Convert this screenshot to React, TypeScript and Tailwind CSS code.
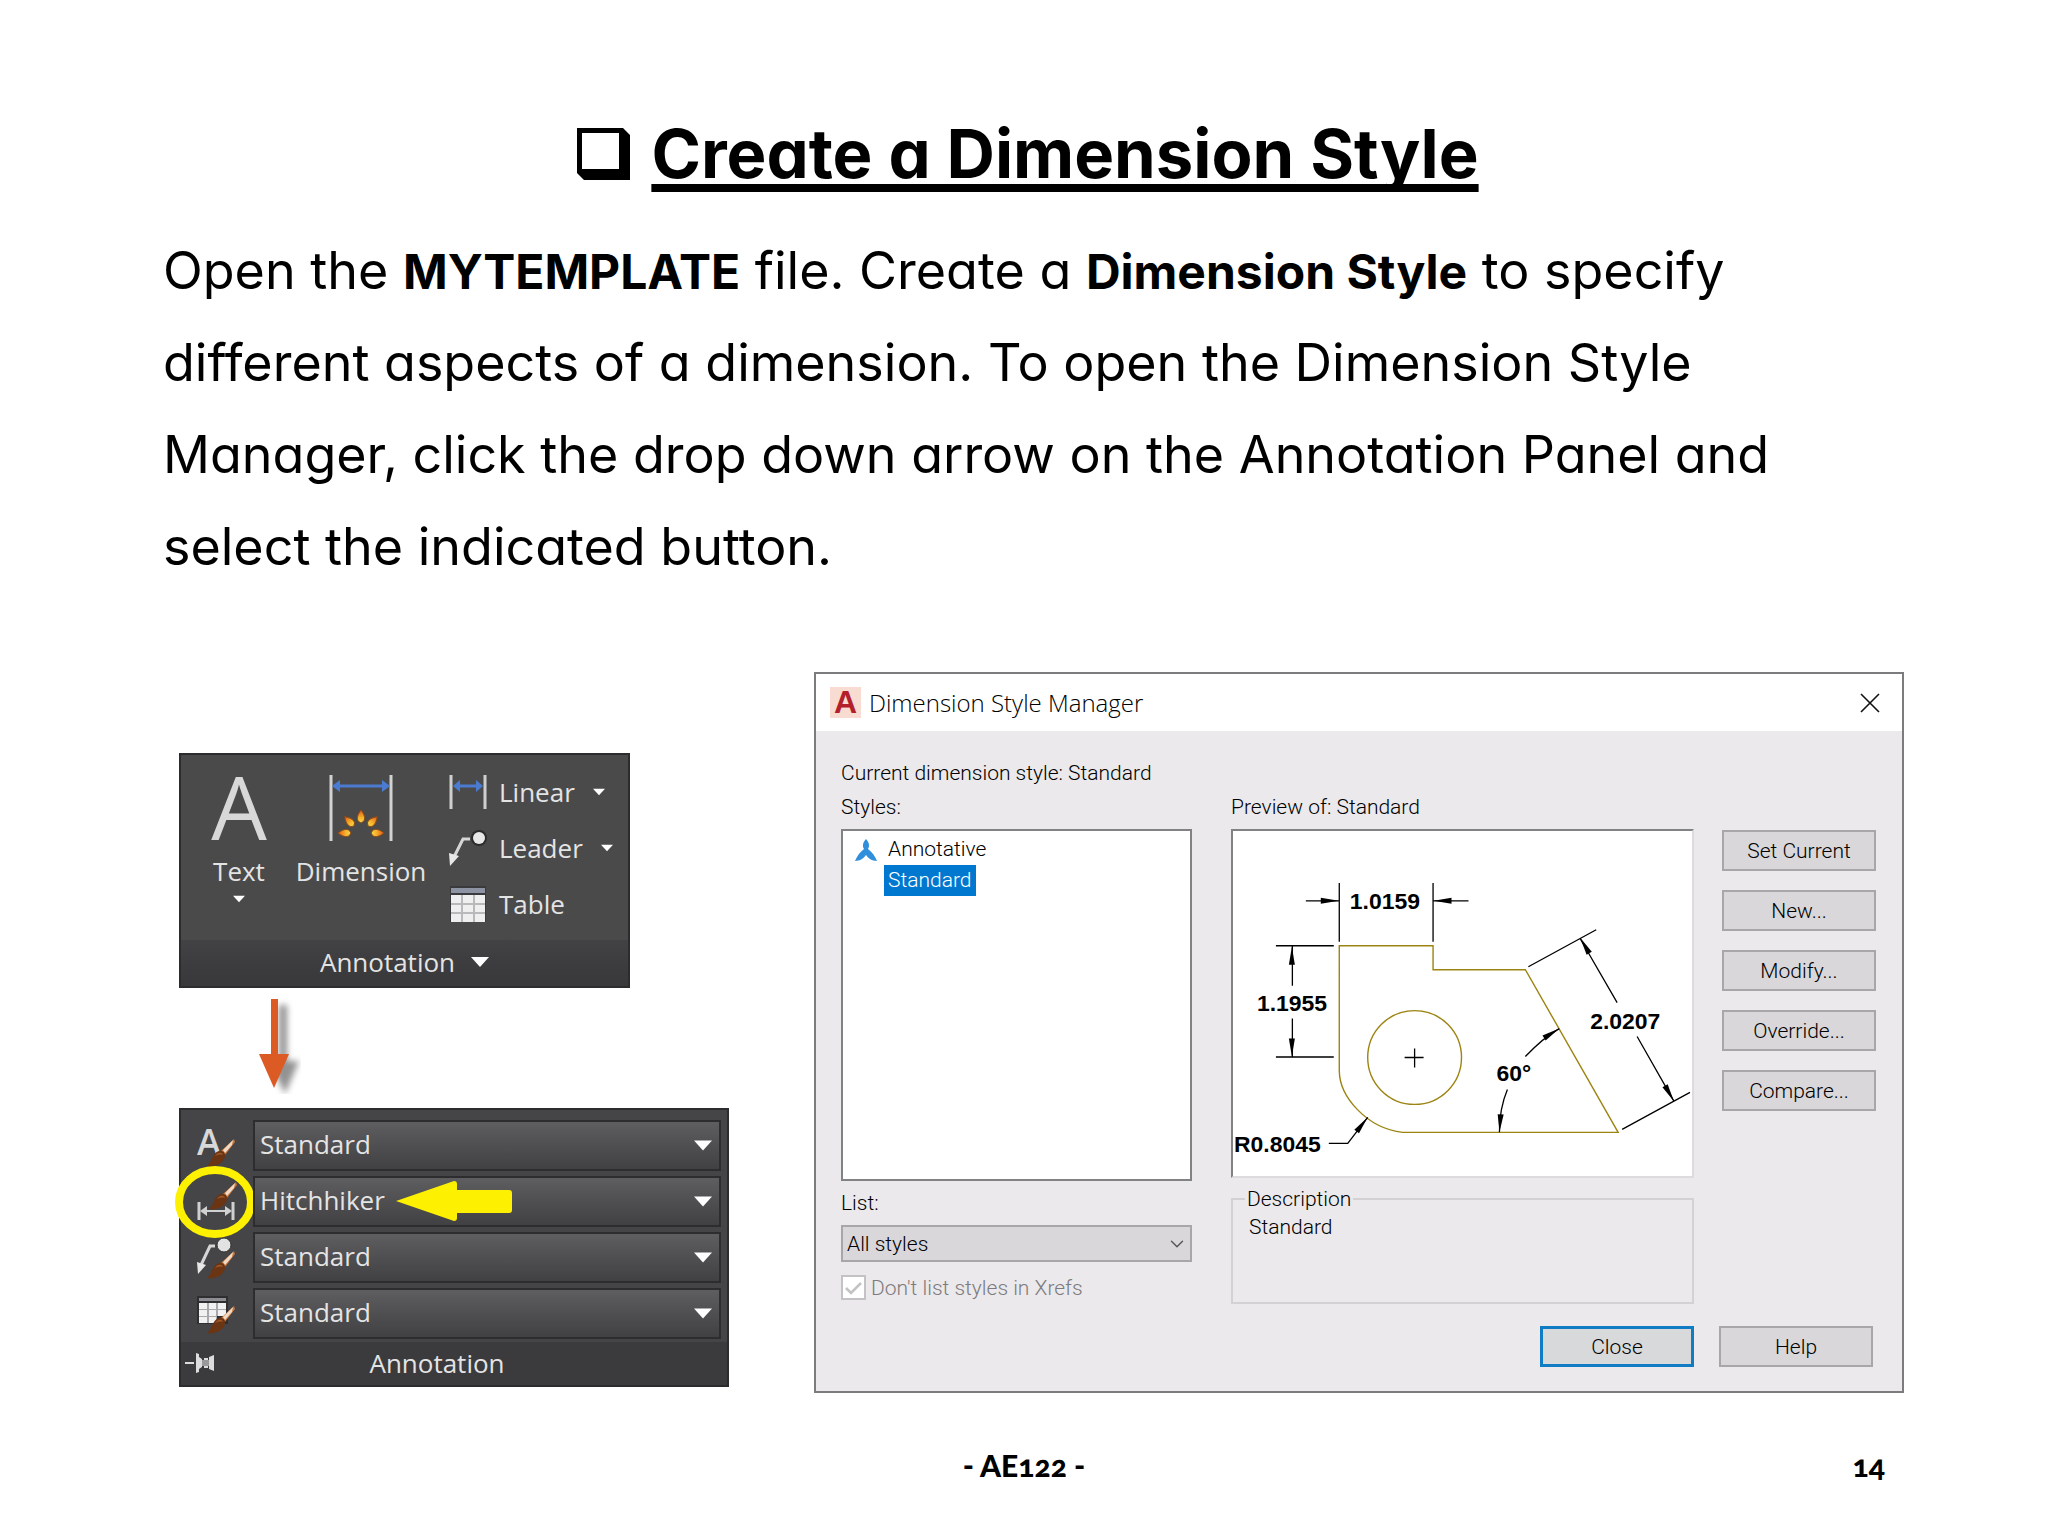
import React, { useState } from 'react';
import { ChevronDown } from 'lucide-react';
import { clsx } from 'clsx';

const TEXT_STYLES = ['Standard', 'Annotative'];
const DIM_STYLES = ['Hitchhiker', 'Standard'];

const Caret: React.FC<{ className?: string }> = ({ className }) => (
  <svg viewBox="0 0 20 11" className={className} aria-hidden="true">
    <path d="M0 0H20L10 11Z" fill="#fff" />
  </svg>
);

// Paint brush shared by all of the style icons
const Brush: React.FC<{ x: number; y: number }> = ({ x, y }) => (
  <g transform={`translate(${x} ${y})`}>
    <path d="M14 12L27 0L28 3L18 16Z" fill="#c9763a" />
    <path d="M16 11L26 1L25 6L18 14Z" fill="#f0d9c4" />
    <path d="M0 27C5 24 5 14 12 12C17 11 20 16 17 20C14 26 6 28 0 27Z" fill="#6b3413" />
    <path d="M8 17C11 13 15 13 16 16C13 15 10 16 8 17Z" fill="#a35a2a" />
  </g>
);

const LinearIcon: React.FC = () => (
  <svg viewBox="0 0 38 34" className="h-[34px] w-[38px]" aria-hidden="true">
    <path d="M2 0V34M36 0V34" stroke="#cfcfcf" strokeWidth="3" />
    <path d="M6 11H32" stroke="#4a7bd0" strokeWidth="3" />
    <path d="M4 11L11 5V17ZM34 11L27 5V17Z" fill="#4a7bd0" />
  </svg>
);

const LeaderIcon: React.FC = () => (
  <svg viewBox="0 0 38 36" className="h-9 w-[38px]" aria-hidden="true">
    <circle cx="30" cy="8" r="8" fill="#2b2b2d" />
    <circle cx="30" cy="8" r="6" fill="#e8e8e8" />
    <path d="M21 9H14L5 27" fill="none" stroke="#d6d6d6" strokeWidth="3" />
    <path d="M0 23L10 26L1 36Z" fill="#e8e8e8" />
  </svg>
);

const TableIcon: React.FC = () => (
  <svg viewBox="0 0 38 38" className="h-[38px] w-[38px]" aria-hidden="true">
    <rect x="1" y="1" width="36" height="36" fill="#3a3a3c" />
    <rect x="2" y="3" width="34" height="5" fill="#8d93a3" />
    <rect x="2" y="10" width="34" height="27" fill="#b9b9bb" />
    <path d="M2 10H12V18H2ZM14 10H24V18H14ZM26 10H36V18H26ZM2 20H12V27H2ZM14 20H24V27H14ZM26 20H36V27H26ZM2 29H12V37H2ZM14 29H24V37H14ZM26 29H36V37H26Z" fill="#efefef" />
  </svg>
);

const DimensionIcon: React.FC = () => (
  <svg viewBox="0 0 64 66" className="h-[66px] w-16" aria-hidden="true">
    <defs>
      <linearGradient id="flame" x1="0" y1="0" x2="0" y2="1">
        <stop offset="0" stopColor="#e2571c" />
        <stop offset="0.6" stopColor="#f5b32a" />
        <stop offset="1" stopColor="#f4d954" />
      </linearGradient>
    </defs>
    <path d="M2 0V66M62 0V66" stroke="#d2d2d2" strokeWidth="3" />
    <path d="M6 11H58" stroke="#4a7bd0" strokeWidth="3" />
    <path d="M3 11L11 5V17ZM61 11L53 5V17Z" fill="#4a7bd0" />
    {[-90, -45, 0, 45, 90].map(angle => (
      <path
        key={angle}
        d="M32 35C36 40 36 43 35 46L32 48L29 46C28 43 28 40 32 35Z"
        fill="url(#flame)"
        stroke="#8b4a12"
        transform={`rotate(${angle} 32 58)`}
      />
    ))}
  </svg>
);

const RibbonPanel: React.FC = () => (
  <section className="flex w-[451px] flex-col border-2 border-[#2c2c2e] bg-[#4b4a4b] text-[26px] leading-8 text-[#e4e4e4]">
    <div className="flex h-[185px] pl-4 pt-3">
      <button className="flex w-[84px] flex-col items-center">
        <span className="h-[84px] text-[88px] leading-[78px] text-[#d8d8d8]">A</span>
        <span className="mt-1">Text</span>
        <Caret className="mt-2 h-2 w-3" />
      </button>
      <button className="ml-3 flex w-[136px] flex-col items-center pt-2">
        <DimensionIcon />
        <span className="mt-[14px]">Dimension</span>
      </button>
      <div className="ml-5 flex flex-col gap-6 pt-[9px]">
        <button className="flex h-8 items-center gap-3">
          <LinearIcon />
          <span>Linear</span>
          <Caret className="ml-[6px] h-2 w-3" />
        </button>
        <button className="flex h-8 items-center gap-3">
          <LeaderIcon />
          <span>Leader</span>
          <Caret className="ml-[6px] h-2 w-3" />
        </button>
        <button className="flex h-8 items-center gap-3">
          <TableIcon />
          <span>Table</span>
        </button>
      </div>
    </div>
    <button className="flex h-[46px] items-center justify-center gap-4 bg-linear-to-b from-[#424143] to-[#38373a] pb-[2px]">
      <span>Annotation</span>
      <Caret className="h-[10px] w-[18px]" />
    </button>
  </section>
);

const TextStyleIcon: React.FC = () => (
  <svg viewBox="0 0 40 44" className="h-11 w-10 overflow-visible" aria-hidden="true">
    <text x="0" y="31" fontSize="36" fontWeight="600" fill="#d8d8d8">A</text>
    <Brush x={10} y={15} />
  </svg>
);

const DimStyleIcon: React.FC = () => (
  <svg viewBox="0 0 40 44" className="h-11 w-10" aria-hidden="true">
    <Brush x={12} y={2} />
    <path d="M2 22V40M36 22V40" stroke="#d0d0d0" strokeWidth="3" />
    <path d="M5 31H33" stroke="#d0d0d0" strokeWidth="2" />
    <path d="M3 31L10 26V36ZM35 31L28 26V36Z" fill="#d0d0d0" />
  </svg>
);

const LeaderStyleIcon: React.FC = () => (
  <svg viewBox="0 0 40 44" className="h-11 w-10" aria-hidden="true">
    <path d="M18 10H13L4 29" fill="none" stroke="#d6d6d6" strokeWidth="3" />
    <path d="M0 26L9 29L1 38Z" fill="#e8e8e8" />
    <circle cx="27" cy="9" r="7" fill="#e2e2e2" stroke="#333" strokeWidth="1" />
    <Brush x={10} y={15} />
  </svg>
);

const TableStyleIcon: React.FC = () => (
  <svg viewBox="0 0 40 44" className="h-11 w-10" aria-hidden="true">
    <rect x="0" y="4" width="31" height="28" fill="#2f2f31" />
    <path d="M2 6H29V9H2Z" fill="#8d8d93" />
    <path d="M2 11H29V24H20V31H2Z" fill="#a9a9ab" />
    <path d="M2 11H10V17H2ZM12 11H19V17H12ZM21 11H29V17H21ZM2 18H10V24H2ZM12 18H19V24H12ZM21 18H29V24H21ZM2 25H10V31H2ZM12 25H19V31H12Z" fill="#f1f1f1" />
    <Brush x={10} y={14} />
  </svg>
);

const styleRows = [
  { id: 'text-style', label: 'Text style', icon: <TextStyleIcon />, options: TEXT_STYLES },
  { id: 'dim-style', label: 'Dimension style', icon: <DimStyleIcon />, options: DIM_STYLES, marked: true },
  { id: 'leader-style', label: 'Leader style', icon: <LeaderStyleIcon />, options: TEXT_STYLES },
  { id: 'table-style', label: 'Table style', icon: <TableStyleIcon />, options: TEXT_STYLES },
];

const StylesPanel: React.FC = () => (
  <section className="w-[550px] border-2 border-[#2c2c2e] bg-[#454446] pt-[10px] text-[26px] leading-8 text-[#e4e4e4]">
    <div className="flex flex-col gap-[5px] pr-[6px]">
      {styleRows.map(row => (
        <div key={row.id} className="flex items-center">
          <div className="relative ml-4 mr-4 flex-none">
            {row.icon}
            {row.marked && (
              <svg viewBox="0 0 80 72" className="absolute -left-[22px] -top-[14px] h-[72px] w-20" aria-hidden="true">
                <ellipse cx="40" cy="36" rx="36" ry="32" fill="none" stroke="#fdf000" strokeWidth="8" />
              </svg>
            )}
          </div>
          <div className="relative flex-1">
            <select
              id={row.id}
              aria-label={row.label}
              className="block h-[51px] w-full appearance-none border-2 border-[#2d2d2f] bg-linear-to-b from-[#5e5d5f] to-[#414042] pb-[3px] pl-[5px]"
            >
              {row.options.map(option => (
                <option key={option}>{option}</option>
              ))}
            </select>
            <Caret className="pointer-events-none absolute right-[9px] top-5 h-[11px] w-[18px]" />
            {row.marked && (
              <svg viewBox="0 0 116 40" className="absolute left-[143px] top-[5px] h-10 w-[116px]" aria-hidden="true">
                <path d="M0 20L58 0Q61 0 61 3V9H113Q116 9 116 12V29Q116 32 113 32H61V37Q61 40 58 40Z" fill="#fdf000" />
              </svg>
            )}
          </div>
        </div>
      ))}
    </div>
    <div className="mt-[3px] flex h-[43px] items-center bg-[#3b3a3c] pb-[2px] pl-1">
      <svg viewBox="0 0 30 24" className="h-6 w-[30px]" aria-hidden="true">
        <path d="M0 11H9V13H0ZM11 2L14 3V21L11 22ZM19 7H23V17H19Z" fill="#dcdcdc" />
        <path d="M14 6L17 8V16L14 18ZM24 6L29 4V20L24 18Z" fill="#dcdcdc" />
        <path d="M17 9H24V15H17Z" fill="#9a9a9c" />
      </svg>
      <span className="flex-1 pr-[68px] text-center">Annotation</span>
    </div>
  </section>
);

const DownArrow: React.FC = () => (
  <svg viewBox="0 0 50 104" className="ml-[72px] h-[104px] w-[50px]" aria-hidden="true">
    <defs>
      <filter id="arrow-blur">
        <feGaussianBlur stdDeviation="3" />
      </filter>
    </defs>
    <path d="M20 9H28V65H40L26 98L10 65H20Z" transform="translate(8 6)" fill="#777" opacity="0.8" filter="url(#arrow-blur)" />
    <path d="M20 9H27V64H38L23 98L8 64H20Z" fill="#dc5a24" />
  </svg>
);

const Arrowhead: React.FC<{ x: number; y: number; angle: number }> = ({ x, y, angle }) => (
  <path d="M0 0L-18 -3L-18 3Z" transform={`translate(${x} ${y}) rotate(${angle})`} fill="#000" />
);

const PreviewDrawing: React.FC = () => (
  <svg viewBox="23 52 460 346" className="block w-full" role="img" aria-label="Dimension style preview">
    <g fill="none" stroke="#9c8412" strokeWidth="1.4">
      <path d="M129.500 167H223.500V191H316L409 354H193C157 350 129.500 318 129.500 292Z" />
      <circle cx="205" cy="279" r="47" />
    </g>
    <g fill="none" stroke="#000" strokeWidth="1.3">
      <path d="M129.500 104V163M223.500 104V163M96 122H129M224 122H259" />
      <path d="M66 167H124M66 278.500H124M82.500 167V207M82.500 240V278" />
      <path d="M319 188L387 151M413 351L481 314M371 160L408 224M428 258L465 323" />
      <path d="M195 279H214M205 270V289" />
      <path d="M350 250Q334 259 316 278M298 311Q290 330 290 354" />
      <path d="M119 365H138L158 339" />
    </g>
    <Arrowhead x={129} y={122} angle={0} />
    <Arrowhead x={224} y={122} angle={180} />
    <Arrowhead x={82} y={168} angle={-90} />
    <Arrowhead x={82} y={278} angle={90} />
    <Arrowhead x={371} y={159} angle={-120} />
    <Arrowhead x={465} y={323} angle={60} />
    <Arrowhead x={350} y={250} angle={-32} />
    <Arrowhead x={290} y={354} angle={94} />
    <Arrowhead x={158} y={339} angle={-52} />
    <g className="font-['Liberation_Sans',sans-serif] text-[23px] font-bold" fill="#000">
      <text x="140" y="130">1.0159</text>
      <text x="47" y="232">1.1955</text>
      <text x="381" y="250">2.0207</text>
      <text x="287" y="303">60°</text>
      <text x="24" y="374">R0.8045</text>
    </g>
  </svg>
);

const buttonClass = 'h-[41px] border-2 border-[#a8a6a8] bg-[#d9d7d9]';

const DimensionStyleManager: React.FC = () => {
  const [selected, setSelected] = useState('Standard');

  return (
    <section className="flex-1 border-2 border-[#7c7b7e] bg-[#ebe9eb] font-[Roboto,sans-serif] text-[21px] font-light leading-[34px] text-black">
      <header className="flex h-[57px] items-center bg-white pl-[14px] pr-[18px]">
        <span className="flex h-[31px] w-[31px] items-center justify-center bg-[#f8dcd2] font-['Liberation_Sans',sans-serif] text-[32px] font-bold leading-[31px] text-[#b3202c]">
          A
        </span>
        <h2 className="ml-2 flex-1 font-['Open_Sans',sans-serif] text-2xl font-light">Dimension Style Manager</h2>
        <button aria-label="Close window" className="p-1">
          <svg viewBox="0 0 20 20" className="h-5 w-5" aria-hidden="true">
            <path d="M1 1L19 19M19 1L1 19" stroke="#111" strokeWidth="1.6" />
          </svg>
        </button>
      </header>

      <div className="pl-[25px] pr-[26px] pt-[25px]">
        <p>Current dimension style: Standard</p>
        <div className="grid grid-cols-[351fr_530fr_154fr]">
          <div>
            <p id="styles-label">Styles:</p>
            <ul role="listbox" aria-labelledby="styles-label" className="mt-[5px] h-[352px] border-2 border-[#828184] bg-white pl-3 pt-[3px]">
              {['Annotative', 'Standard'].map(name => (
                <li key={name} role="option" aria-selected={selected === name} className="flex h-[31px] items-center" onClick={() => setSelected(name)}>
                  <span className="w-[29px]">
                    {name === 'Annotative' && (
                      <svg viewBox="0 0 22 22" className="h-[22px] w-[22px]" aria-hidden="true">
                        <path d="M11 0C14 3 15 7 13 10C17 13 20 17 22 22C17 22 13 19 11 16C9 19 5 22 0 22C2 17 5 13 9 10C7 7 8 3 11 0Z" fill="#2f8fdd" />
                      </svg>
                    )}
                  </span>
                  <span className={clsx('h-[31px] px-1 leading-[31px]', selected === name && 'bg-[#0078cf] text-white')}>{name}</span>
                </li>
              ))}
            </ul>
            <label htmlFor="list-filter" className="mt-[5px] block">List:</label>
            <div className="relative mt-[5px]">
              <select id="list-filter" className="block h-[37px] w-full appearance-none border-2 border-[#a8a6a8] bg-[#d9d7d9] pl-1">
                <option>All styles</option>
                <option>Styles in use</option>
              </select>
              <ChevronDown className="pointer-events-none absolute right-1 top-2 h-[22px] w-[22px] text-[#555]" strokeWidth={1.5} />
            </div>
            <label className="mt-[13px] flex h-[25px] items-center gap-[5px] text-[#7d7b7e]">
              <span className="relative h-[25px] w-[25px]">
                <input type="checkbox" defaultChecked disabled className="block h-[25px] w-[25px] appearance-none border-2 border-[#c4c2c4] bg-white" />
                <svg viewBox="0 0 25 25" className="absolute inset-0" aria-hidden="true">
                  <path d="M5 13L10 18L20 8" fill="none" stroke="#c4c2c4" strokeWidth="2.5" />
                </svg>
              </span>
              Don't list styles in Xrefs
            </label>
          </div>

          <div className="ml-[39px] mr-[28px]">
            <p>Preview of: Standard</p>
            <div className="mt-[5px] border-2 border-b-[#dddbdd] border-l-[#828184] border-r-[#dddbdd] border-t-[#828184] bg-white">
              <PreviewDrawing />
            </div>
            <fieldset className="mt-1 h-[122px] border-2 border-[#d3d1d3] pl-4">
              <legend className="-ml-1 px-[2px]">Description</legend>
              <p className="-mt-[6px]">Standard</p>
            </fieldset>
          </div>

          <div className="flex flex-col gap-[19px] pt-10">
            {['Set Current', 'New...', 'Modify...', 'Override...', 'Compare...'].map(label => (
              <button key={label} className={buttonClass}>{label}</button>
            ))}
          </div>
        </div>
      </div>

      <footer className="mb-6 mt-[22px] flex justify-end gap-[25px] pr-[29px]">
        <button className="h-[41px] w-[154px] border-3 border-[#0f7cc4] bg-[#d8d9db]">Close</button>
        <button className={clsx(buttonClass, 'w-[154px]')}>Help</button>
      </footer>
    </section>
  );
};

const App: React.FC = () => (
  <main className="min-h-screen bg-white text-black">
    <div className="font-[Inter,sans-serif] [font-feature-settings:'cv11']">
      <h1 className="flex items-center justify-center gap-5 pl-2 pt-[108px] text-[67px] font-bold leading-[92px]">
        <svg viewBox="0 0 54 54" className="h-[54px] w-[54px]" aria-hidden="true">
          <path fillRule="evenodd" d="M0 1H46L53 8V53H7L0 46ZM5 6V42H42V6Z" />
        </svg>
        <span className="underline decoration-8 underline-offset-6 [text-decoration-skip-ink:none]">Create a Dimension Style</span>
      </h1>
      <p className="px-[163px] pt-[25px] text-[52px] leading-[92px]">
        Open the <strong className="text-[48px] leading-none">MYTEMPLATE</strong> file. Create a{' '}
        <strong className="text-[48px] leading-none">Dimension Style</strong> to specify different aspects of a
        dimension. To open the Dimension Style Manager, click the drop down arrow on the Annotation Panel and select the
        indicated button.
      </p>
    </div>

    <div className="mt-[79px] flex items-start gap-[85px] pl-[179px] pr-[144px]">
      <div className="flex-none pt-[81px] font-['Open_Sans',sans-serif]">
        <RibbonPanel />
        <div className="h-[120px] pt-[2px]">
          <DownArrow />
        </div>
        <StylesPanel />
      </div>
      <DimensionStyleManager />
    </div>

    <footer className="mt-[52px] grid grid-cols-3 px-[163px] font-[Lato,sans-serif] text-[30px] font-black leading-10 [font-feature-settings:'onum']">
      <span className="col-start-2 text-center">- AE122 -</span>
      <span className="text-right">14</span>
    </footer>
  </main>
);

export default App;
